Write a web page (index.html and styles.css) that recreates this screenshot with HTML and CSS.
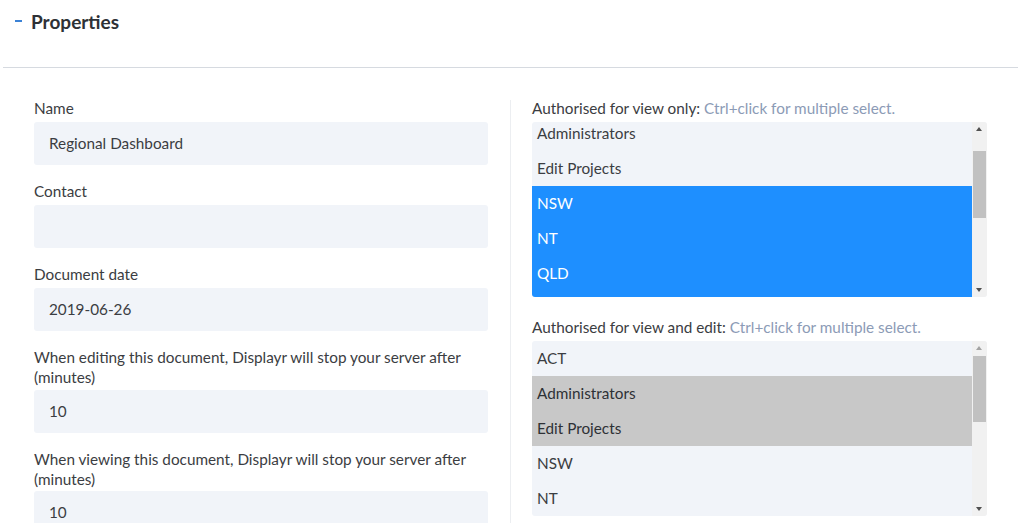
FILE: index.html
```html
<!DOCTYPE html>
<html>
<head>
<meta charset="utf-8">
<link rel="stylesheet" href="styles.css">
</head>
<body>
<div class="header">
  <span class="dash"></span>
  <h1 class="title">Properties</h1>
</div>
<div class="main">
  <div class="col-left">
    <div class="field">
      <div class="label">Name</div>
      <div class="input">Regional Dashboard</div>
    </div>
    <div class="field">
      <div class="label">Contact</div>
      <div class="input"></div>
    </div>
    <div class="field">
      <div class="label">Document date</div>
      <div class="input">2019-06-26</div>
    </div>
    <div class="field">
      <div class="label">When editing this document, Displayr will stop your server after (minutes)</div>
      <div class="input">10</div>
    </div>
    <div class="field">
      <div class="label">When viewing this document, Displayr will stop your server after (minutes)</div>
      <div class="input">10</div>
    </div>
  </div>
  <div class="col-right">
    <div class="field-r">
      <div class="label">Authorised for view only: <span class="hint">Ctrl+click for multiple select.</span></div>
      <div class="listbox">
        <div class="items items-scrolled">
          <div class="item">Administrators</div>
          <div class="item">Edit Projects</div>
          <div class="item sel-blue">NSW</div>
          <div class="item sel-blue">NT</div>
          <div class="item sel-blue">QLD</div>
          <div class="item sel-blue">SA</div>
        </div>
        <div class="scrollbar">
          <div class="arrow up"></div>
          <div class="track"><div class="thumb thumb-1"></div></div>
          <div class="arrow down"></div>
        </div>
      </div>
    </div>
    <div class="field-r">
      <div class="label">Authorised for view and edit: <span class="hint">Ctrl+click for multiple select.</span></div>
      <div class="listbox">
        <div class="items">
          <div class="item">ACT</div>
          <div class="item sel-gray">Administrators</div>
          <div class="item sel-gray">Edit Projects</div>
          <div class="item">NSW</div>
          <div class="item">NT</div>
          <div class="item">QLD</div>
        </div>
        <div class="scrollbar">
          <div class="arrow up faint"></div>
          <div class="track"><div class="thumb thumb-2"></div></div>
          <div class="arrow down"></div>
        </div>
      </div>
    </div>
  </div>
</div>
</body>
</html>
```
FILE: styles.css
```css
html, body {
  margin: 0;
  padding: 0;
  background: #ffffff;
  font-family: Lato, "Noto Sans", sans-serif;
  color: #3b3d42;
  overflow: hidden;
  height: 523px;
}

.header {
  height: 67px;
  margin: 0 6px 0 3px;
  border-bottom: 1px solid #d6dae0;
  display: flex;
  align-items: flex-start;
  padding-left: 12px;
  box-sizing: content-box;
}

.dash {
  width: 7px;
  height: 2px;
  background: #3b82d6;
  margin-top: 20px;
  margin-right: 9px;
}

.title {
  margin: 10px 0 0 0;
  font-size: 19px;
  line-height: 24px;
  font-weight: 700;
  color: #2e3136;
}

.main {
  display: grid;
  grid-template-columns: 510px 1fr;
  padding-top: 30px;
}

.col-left {
  padding-left: 34px;
  padding-right: 22px;
}

.field {
  margin-bottom: 16px;
}

.label {
  font-size: 15.3px;
  line-height: 20px;
  color: #3b3d42;
  margin-bottom: 4px;
}

.input {
  height: 43px;
  background: #f1f4f9;
  border-radius: 3px;
  font-size: 15.3px;
  line-height: 43px;
  padding-left: 15px;
  color: #3b3d42;
}

.field:nth-child(4) .label {
  margin-bottom: 3px;
}

.field:nth-child(5) .label {
  line-height: 19.5px;
  margin-bottom: 2px;
}

.field:nth-child(4) {
  margin-bottom: 17px;
}

.col-right {
  border-left: 1px solid #eceef1;
  margin-top: 2px;
  padding-left: 21px;
  padding-right: 37px;
}

.field-r {
  margin-bottom: 22px;
}

.field-r .label {
  margin-top: -2px;
}

.hint {
  color: #8c9bb6;
}

.listbox {
  height: 175px;
  background: #f1f4f9;
  border-radius: 3px;
  display: flex;
  overflow: hidden;
  margin-top: 4px;
}

.items {
  flex: 1;
  overflow: hidden;
}

.items-scrolled .item:first-child {
  margin-top: -6px;
}

.item {
  height: 35px;
  line-height: 35px;
  font-size: 15.3px;
  padding-left: 5px;
  color: #3b3d42;
}

.sel-blue {
  background: #1e8fff;
  color: #ffffff;
}

.sel-gray {
  background: #c8c8c8;
  color: #2e3136;
}

.scrollbar {
  width: 15px;
  background: #f1f1f1;
  display: flex;
  flex-direction: column;
}

.arrow {
  height: 15px;
  position: relative;
}

.arrow::after {
  content: "";
  position: absolute;
  left: 4px;
  width: 0;
  height: 0;
  border-left: 3.5px solid transparent;
  border-right: 3.5px solid transparent;
}

.arrow.up::after {
  top: 5px;
  border-bottom: 4px solid #505050;
}

.arrow.up.faint::after {
  border-bottom-color: #a3a3a3;
}

.arrow.down::after {
  top: 6px;
  border-top: 4px solid #505050;
}

.track {
  flex: 1;
  padding: 0 1px;
}

.thumb {
  background: #c1c1c1;
}

.thumb-1 {
  margin-top: 14px;
  height: 67px;
}

.thumb-2 {
  margin-top: 0;
  height: 66px;
}
```
